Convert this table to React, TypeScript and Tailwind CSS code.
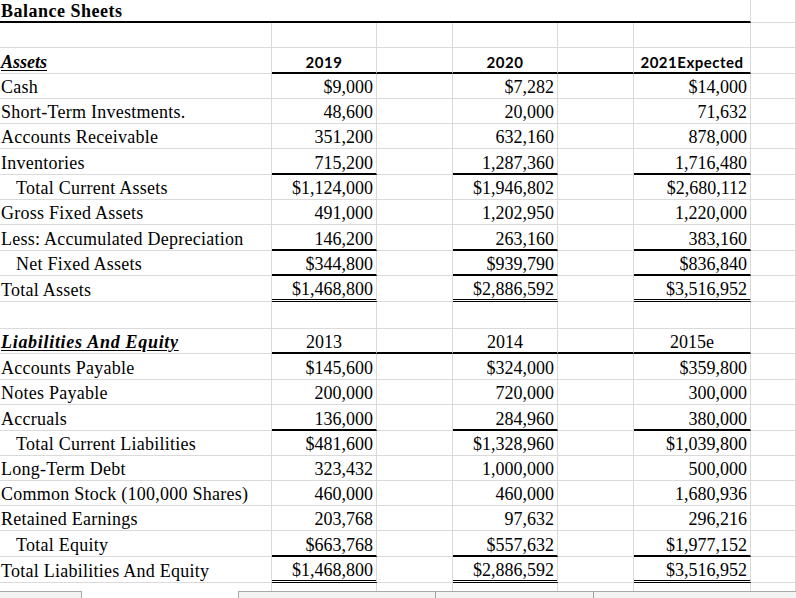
import React from "react";

type B = "g" | "k" | "d" | "n";

const HEIGHTS: Record<number, string> = {
  7: "h-[7px]",
  8: "h-[8px]",
  23: "h-[23px]",
  25: "h-[25px]",
  26: "h-[26px]",
  27: "h-[27px]",
};

const WIDTHS = ["w-[272px]", "w-[105px]", "w-[76px]", "w-[105px]", "w-[76px]", "w-[117px]", "flex-1"];

const BORDER: Record<B, string> = {
  g: "border-b border-b-[#dadada] pb-[1px]",
  k: "border-b-2 border-b-black pb-0",
  d: "border-b-[3px] border-double border-b-black pb-0",
  n: "pb-[1px]",
};

const serif = "font-['Liberation_Serif','Times_New_Roman',serif]";

function Cell({
  col,
  b = "g",
  align = "left",
  children,
  extra = "",
}: {
  col: number;
  b?: B;
  align?: "left" | "right" | "center";
  children?: React.ReactNode;
  extra?: string;
}) {
  const al =
    align === "right" ? "justify-end pr-[3px]" : align === "center" ? "justify-center" : "justify-start pl-[1px]";
  return (
    <div
      className={`${WIDTHS[col]} shrink-0 h-full flex items-end ${al} border-r border-r-[#dadada] ${BORDER[b]} ${extra} whitespace-nowrap overflow-visible`}
    >
      {children !== undefined ? <span className="leading-[20px] block">{children}</span> : null}
    </div>
  );
}

function Row({ h, children }: { h: number; children: React.ReactNode }) {
  return <div className={`flex w-full ${HEIGHTS[h]}`}>{children}</div>;
}

type DataRow = {
  label: string;
  indent?: boolean;
  vals: [string, string, string];
  b?: B;
  h: number;
};

function DataLine({ r }: { r: DataRow }) {
  const b = r.b ?? "g";
  return (
    <Row h={r.h}>
      <Cell col={0}>
        <span className={`tracking-[0.25px] ${r.indent ? "pl-[15px]" : ""}`}>{r.label}</span>
      </Cell>
      <Cell col={1} b={b} align="right">
        {r.vals[0]}
      </Cell>
      <Cell col={2} />
      <Cell col={3} b={b} align="right">
        {r.vals[1]}
      </Cell>
      <Cell col={4} />
      <Cell col={5} b={b} align="right">
        {r.vals[2]}
      </Cell>
      <Cell col={6} />
    </Row>
  );
}

function Blank({ h, b = "g" }: { h: number; b?: B }) {
  return (
    <Row h={h}>
      {[0, 1, 2, 3, 4, 5, 6].map((i) => (
        <Cell key={i} col={i} b={b} />
      ))}
    </Row>
  );
}

const assets: DataRow[] = [
  { label: "Cash", vals: ["$9,000", "$7,282", "$14,000"], h: 25 },
  { label: "Short-Term Investments.", vals: ["48,600", "20,000", "71,632"], h: 25 },
  { label: "Accounts Receivable", vals: ["351,200", "632,160", "878,000"], h: 25 },
  { label: "Inventories", vals: ["715,200", "1,287,360", "1,716,480"], b: "k", h: 26 },
  { label: "Total Current Assets", indent: true, vals: ["$1,124,000", "$1,946,802", "$2,680,112"], h: 25 },
  { label: "Gross Fixed Assets", vals: ["491,000", "1,202,950", "1,220,000"], h: 25 },
  { label: "Less: Accumulated Depreciation", vals: ["146,200", "263,160", "383,160"], b: "k", h: 26 },
  { label: "Net Fixed Assets", indent: true, vals: ["$344,800", "$939,790", "$836,840"], b: "k", h: 25 },
  { label: "Total Assets", vals: ["$1,468,800", "$2,886,592", "$3,516,952"], b: "d", h: 26 },
];

const liabilities: DataRow[] = [
  { label: "Accounts Payable", vals: ["$145,600", "$324,000", "$359,800"], h: 26 },
  { label: "Notes Payable", vals: ["200,000", "720,000", "300,000"], h: 25 },
  { label: "Accruals", vals: ["136,000", "284,960", "380,000"], b: "k", h: 26 },
  { label: "Total Current Liabilities", indent: true, vals: ["$481,600", "$1,328,960", "$1,039,800"], h: 25 },
  { label: "Long-Term Debt", vals: ["323,432", "1,000,000", "500,000"], h: 25 },
  { label: "Common Stock (100,000 Shares)", vals: ["460,000", "460,000", "1,680,936"], h: 25 },
  { label: "Retained Earnings", vals: ["203,768", "97,632", "296,216"], h: 25 },
  { label: "Total Equity", indent: true, vals: ["$663,768", "$557,632", "$1,977,152"], b: "k", h: 26 },
  { label: "Total Liabilities And Equity", vals: ["$1,468,800", "$2,886,592", "$3,516,952"], b: "d", h: 26 },
];

export default function App() {
  const hdr = "font-['Lato','Open_Sans',sans-serif] font-bold text-[15px] tracking-[0.5px]";
  return (
    <div className={`w-[796px] h-[598px] overflow-hidden bg-white text-black text-[18px] ${serif}`}>
      {/* Title row */}
      <Row h={23}>
        <div className="w-[751px] shrink-0 h-full flex items-end pl-[1px] border-r border-r-[#dadada] border-b-2 border-b-black">
          <span className="leading-[20px] font-bold tracking-[0.5px]">Balance Sheets</span>
        </div>
        <Cell col={6} />
      </Row>
      <Blank h={25} />
      {/* Assets header */}
      <Row h={26}>
        <Cell col={0}>
          <span className="font-bold italic underline underline-offset-[2px]">Assets</span>
        </Cell>
        <Cell col={1} b="k" align="center">
          <span className={`${hdr} leading-[18px]`}>2019</span>
        </Cell>
        <Cell col={2} b="k" />
        <Cell col={3} b="k" align="center">
          <span className={`${hdr} leading-[18px]`}>2020</span>
        </Cell>
        <Cell col={4} b="k" />
        <Cell col={5} b="k" align="center">
          <span className={`${hdr} leading-[18px]`}>2021Expected</span>
        </Cell>
        <Cell col={6} />
      </Row>
      {assets.map((r) => (
        <DataLine key={r.label} r={r} />
      ))}
      <Blank h={27} />
      {/* Liabilities header */}
      <Row h={25}>
        <Cell col={0}>
          <span className="font-bold italic underline underline-offset-[2px] tracking-[0.7px]">
            Liabilities And Equity
          </span>
        </Cell>
        <Cell col={1} b="k" align="center">
          2013
        </Cell>
        <Cell col={2} b="k" />
        <Cell col={3} b="k" align="center">
          2014
        </Cell>
        <Cell col={4} b="k" />
        <Cell col={5} b="k" align="center">
          2015e
        </Cell>
        <Cell col={6} />
      </Row>
      {liabilities.map((r) => (
        <DataLine key={r.label} r={r} />
      ))}
      <Blank h={8} b="n" />
      {/* bottom strip */}
      <div className="flex h-[7px] w-full">
        <div className="w-[82px] shrink-0 bg-[#f3f3f3] border-t border-r border-[#a9a9a9]" />
        <div className="w-[156px] shrink-0 bg-white" />
        <div className="flex-1 flex bg-[#f3f3f3] border-t border-l border-[#a9a9a9]">
          <div className="w-[197px] shrink-0 border-r border-r-[#a0a0a0]" />
          <div className="w-[158px] shrink-0 border-r border-r-[#a0a0a0]" />
          <div className="flex-1" />
        </div>
      </div>
    </div>
  );
}
